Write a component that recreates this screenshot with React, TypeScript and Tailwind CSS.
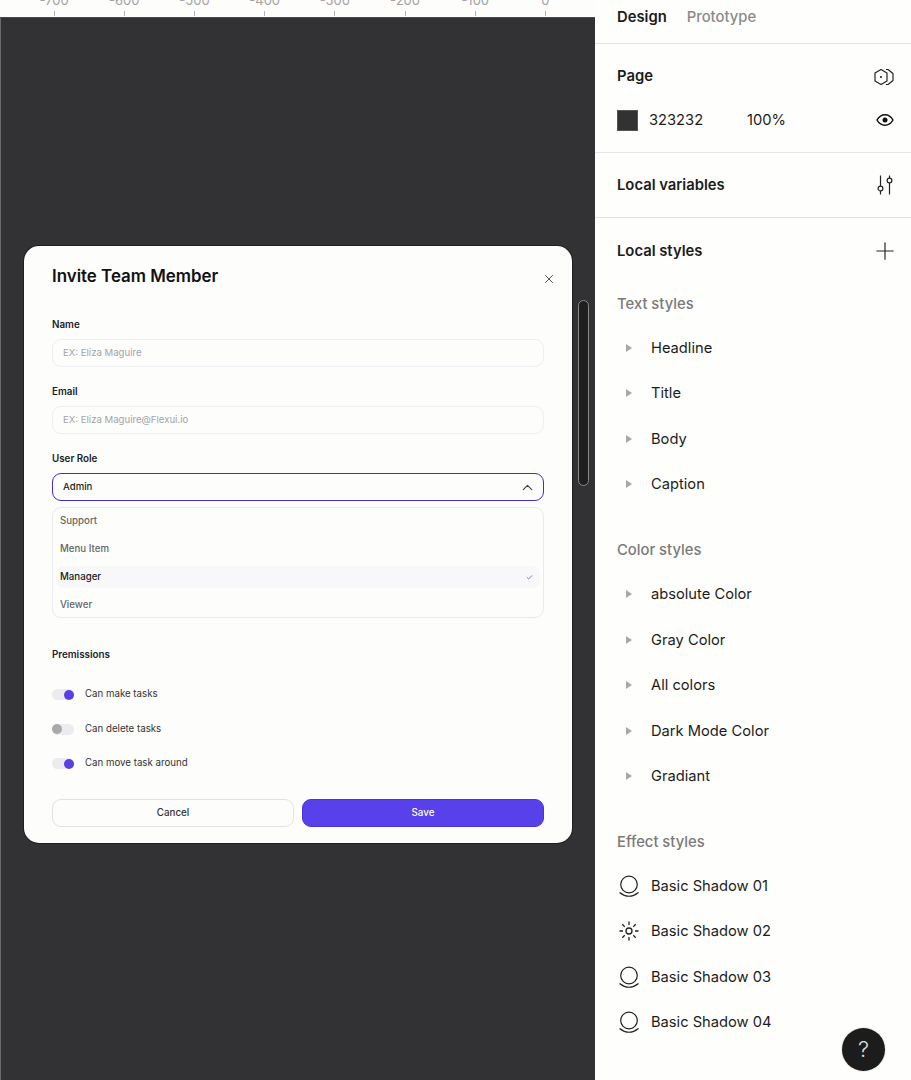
import { Check, ChevronUp, Plus, X } from 'lucide-react';

const rulerMarks = ['-700', '-600', '-500', '-400', '-300', '-200', '-100', '0'];
const textStyles = ['Headline', 'Title', 'Body', 'Caption'];
const colorStyles = ['absolute Color', 'Gray Color', 'All colors', 'Dark Mode Color', 'Gradiant'];
const effectStyles = [
  { name: 'Basic Shadow 01', sun: false },
  { name: 'Basic Shadow 02', sun: true },
  { name: 'Basic Shadow 03', sun: false },
  { name: 'Basic Shadow 04', sun: false },
];
const roles = ['Support', 'Menu Item', 'Manager', 'Viewer'];
const permissions = [
  { label: 'Can make tasks', on: true },
  { label: 'Can delete tasks', on: false },
  { label: 'Can move task around', on: true },
];

function Ruler() {
  return (
    <div className="h-[18px] shrink-0 bg-[#fdfdfb] border-b border-[#4a4a4a] overflow-hidden pl-[19px] flex">
      {rulerMarks.map((mark) => (
        <div key={mark} className="w-[70.2px] shrink-0 flex flex-col items-center">
          <span className="h-[11px] flex items-end text-[13px] leading-none text-[#a3a3a3] pb-[4px]">{mark}</span>
          <span className="w-px h-[5px] bg-[#b5b5b5]" />
        </div>
      ))}
    </div>
  );
}

function Field({ label, placeholder }: { label: string; placeholder: string }) {
  return (
    <div className="h-[67px]">
      <div className="h-[14px] flex items-center text-[9.8px] font-semibold text-[#1c1c1c]">{label}</div>
      <div className="mt-[7px] h-[28px] rounded-[9px] border border-[#eeeef3] flex items-center pl-[10px] text-[9.6px] text-[#a3a3a8]">
        {placeholder}
      </div>
    </div>
  );
}

function Modal() {
  return (
    <div className="w-[548px] h-[597px] rounded-[15px] bg-[#fdfdfb] px-[28px] relative shadow-[0_0_0_1px_#1f1f1f]">
      <h2 className="pt-[18px] h-[72px] text-[16.9px] leading-[24px] font-semibold text-[#111111]">Invite Team Member</h2>
      <button className="absolute right-[16px] top-[26px] text-[#444444]">
        <X size={14} strokeWidth={1.6} />
      </button>
      <Field label="Name" placeholder="EX: Eliza Maguire" />
      <Field label="Email" placeholder="EX: Eliza Maguire@Flexui.io" />
      <div className="h-[14px] flex items-center text-[9.8px] font-semibold text-[#1c1c1c]">User Role</div>
      <div className="mt-[7px] h-[28px] rounded-[9px] border-[1.5px] border-[#3f2fd0] flex items-center justify-between pl-[10px] pr-[7px] text-[9.6px] font-medium text-[#1c1c1c]">
        Admin
        <ChevronUp size={17} strokeWidth={1.7} className="text-[#444444]" />
      </div>
      <div className="mt-[6px] h-[111px] rounded-[9px] border border-[#eaeaee] px-[3px]">
        <div className="-mt-[1px] flex flex-col">
          {roles.map((role) => (
            <div
              key={role}
              className={
                role === 'Manager'
                  ? 'h-[22px] my-[3px] rounded-[7px] bg-[#f8f8fb] flex items-center justify-between px-[4px] text-[9.7px] font-medium text-[#1a1a1a]'
                  : 'h-[28px] flex items-center px-[4px] text-[9.7px] font-medium text-[#666666]'
              }
            >
              {role}
              {role === 'Manager' && <Check size={7} strokeWidth={2.5} className="text-[#5a3fe8] mr-[3px]" />}
            </div>
          ))}
        </div>
      </div>
      <div className="mt-[30px] h-[14px] flex items-center text-[9.8px] font-semibold text-[#20242e]">Premissions</div>
      <div className="mt-[27px] flex flex-col gap-[23.5px]">
        {permissions.map((item) => (
          <div key={item.label} className="h-[11px] flex items-center gap-[11px]">
            <div
              className={
                item.on
                  ? 'w-[22px] h-[11px] rounded-full bg-[#ececf0] flex items-center justify-end'
                  : 'w-[22px] h-[11px] rounded-full bg-[#ececf0] flex items-center justify-start'
              }
            >
              <div className={item.on ? 'w-[10px] h-[10px] rounded-full bg-[#5640e6]' : 'w-[10px] h-[10px] rounded-full bg-[#a9a9a9]'} />
            </div>
            <span className="text-[9.7px] text-[#333333]">{item.label}</span>
          </div>
        ))}
      </div>
      <div className="mt-[30px] flex gap-[8px]">
        <button className="flex-1 h-[28px] rounded-[9px] border border-[#e2e2e2] text-[9.8px] font-medium text-[#333333]">Cancel</button>
        <button className="flex-1 h-[28px] rounded-[9px] bg-[#5840ea] border border-[#4a34d8] text-[9.8px] font-medium text-white">Save</button>
      </div>
    </div>
  );
}

function Canvas() {
  return (
    <div className="w-[595px] shrink-0 flex flex-col bg-[#323234] relative">
      <Ruler />
      <div className="flex-1 pl-[23px] pt-[228px] border-l border-[#6a6a6a]">
        <Modal />
      </div>
      <div className="absolute left-[578px] top-[300px] w-[11px] h-[186px] rounded-full border border-[#8a8a8a] bg-[#1f1f1f]" />
    </div>
  );
}

function HexIcon() {
  return (
    <svg width="20" height="18" viewBox="0 0 20 18" fill="none" stroke="#222222" strokeWidth="1.2" strokeLinejoin="round">
      <path d="M7 1.500 13 5v8l-6 3.500L1 13V5z" />
      <path d="M12 1.500h2L19 5.500v7L14 16.500h-2" />
      <circle cx="7" cy="9" r="1.100" fill="#222222" stroke="none" />
    </svg>
  );
}

function EyeIcon() {
  return (
    <svg width="18" height="14" viewBox="0 0 18 14" fill="none" stroke="#111111" strokeWidth="1.500">
      <path d="M1 7C3 3.500 5.800 1.800 9 1.800S15 3.500 17 7c-2 3.500-4.800 5.200-8 5.200S3 10.500 1 7z" strokeLinejoin="round" />
      <circle cx="9" cy="7" r="2.500" fill="#111111" stroke="none" />
    </svg>
  );
}

function SlidersIcon() {
  return (
    <svg width="18" height="20" viewBox="0 0 18 20" fill="none" stroke="#222222" strokeWidth="1.2">
      <path d="M4.500 0.500v10.500M4.500 16v3.500M13.500 0.500v2.500M13.500 8v11.500" />
      <circle cx="4.500" cy="13.500" r="2.400" />
      <circle cx="13.500" cy="5.500" r="2.400" />
    </svg>
  );
}

function ShadowIcon() {
  return (
    <svg width="22" height="24" viewBox="0 0 22 24" fill="none" stroke="#222222" strokeWidth="1.2">
      <circle cx="11" cy="10.500" r="8.300" />
      <path d="M1.500 18.500Q11 26 20.500 18.500" />
    </svg>
  );
}

function SunIcon() {
  return (
    <svg width="22" height="22" viewBox="0 0 22 22" fill="none" stroke="#222222" strokeWidth="1.3">
      <circle cx="11" cy="11" r="3" />
      <path d="M11 1.500v3.500M11 17v3.500M1.500 11H5M17 11h3.500M4.300 4.300l2.400 2.400M15.300 15.300l2.400 2.400M4.300 17.700l2.400-2.400M15.300 6.700l2.400-2.400" />
    </svg>
  );
}

function Caret() {
  return <span className="w-0 h-0 border-y-[4px] border-y-transparent border-l-[6px] border-l-[#a8a8a8]" />;
}

function StyleRow({ name }: { name: string }) {
  return (
    <div className="h-[45.5px] flex items-center">
      <span className="w-[34px] pl-[9px] flex items-center"><Caret /></span>
      <span className="text-[14.7px] text-[#1c1c1c]">{name}</span>
    </div>
  );
}

function Sidebar() {
  return (
    <div className="flex-1 bg-[#fefefc] relative">
      <div className="h-[44px] border-b border-[#e2e2e2] px-[22px] pb-[17px] flex items-end gap-[20px] text-[14.8px] leading-[18px]">
        <span className="font-semibold text-[#1c1c1c]">Design</span>
        <span className="font-medium text-[#8a8a8a]">Prototype</span>
      </div>
      <div className="h-[109px] border-b border-[#e6e6e6] px-[22px] pr-[17px]">
        <div className="h-[65px] flex items-center justify-between">
          <span className="text-[14.8px] font-semibold text-[#1c1c1c]">Page</span>
          <HexIcon />
        </div>
        <div className="h-[22px] flex items-center text-[14.7px] text-[#1c1c1c]">
          <span className="w-[21px] h-[21px] bg-[#323232] border border-[#555555]" />
          <span className="ml-[11px] w-[98px]">323232</span>
          <span>100%</span>
          <span className="ml-auto flex items-center"><EyeIcon /></span>
        </div>
      </div>
      <div className="h-[65px] border-b border-[#e2e2e2] px-[22px] pr-[17px] flex items-center justify-between">
        <span className="text-[14.8px] font-semibold text-[#1c1c1c]">Local variables</span>
        <SlidersIcon />
      </div>
      <div className="h-[66px] px-[22px] pr-[17px] flex items-center justify-between">
        <span className="text-[14.8px] font-semibold text-[#1c1c1c]">Local styles</span>
        <Plus size={28} strokeWidth={1} className="text-[#222222] -mr-[5px]" />
      </div>
      <div className="px-[22px]">
        <div className="h-[40px] flex items-center text-[14.8px] font-medium text-[#7a7a7a]">Text styles</div>
        <div className="mt-[1px]">
          {textStyles.map((name) => <StyleRow key={name} name={name} />)}
        </div>
        <div className="mt-[23px] h-[40px] flex items-center text-[14.8px] font-medium text-[#7a7a7a]">Color styles</div>
        <div className="mt-[1.5px]">
          {colorStyles.map((name) => <StyleRow key={name} name={name} />)}
        </div>
        <div className="mt-[23px] h-[40px] flex items-center text-[14.8px] font-medium text-[#7a7a7a]">Effect styles</div>
        <div className="mt-[1px]">
          {effectStyles.map((item) => (
            <div key={item.name} className="h-[45.5px] flex items-center">
              <span className="w-[34px] pl-[1px] flex items-center">{item.sun ? <SunIcon /> : <ShadowIcon />}</span>
              <span className="text-[14.7px] text-[#1c1c1c]">{item.name}</span>
            </div>
          ))}
        </div>
      </div>
      <div className="absolute left-[247px] top-[1028px] w-[43px] h-[43px] rounded-full bg-[#1c1c1c] shadow-[0_0_2px_#00000040] flex items-center justify-center text-[22px] font-light text-[#dddddd]">?</div>
    </div>
  );
}

export default function App() {
  return (
    <div className="w-[911px] h-[1080px] flex overflow-hidden font-['Inter',sans-serif]">
      <Canvas />
      <Sidebar />
    </div>
  );
}
